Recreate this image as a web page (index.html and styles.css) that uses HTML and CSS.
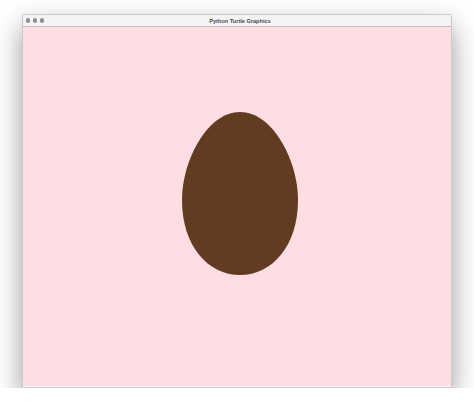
FILE: index.html
```html
<!DOCTYPE html>
<html>
<head>
<meta charset="utf-8">
<link rel="stylesheet" href="styles.css">
</head>
<body>
<div class="window">
  <div class="titlebar">
    <div class="lights"><span class="dot"></span><span class="dot"></span><span class="dot"></span></div>
    <div class="title">Python Turtle Graphics</div>
  </div>
  <div class="canvas">
    <svg class="drawing" width="428" height="360" viewBox="0 0 428 360">
      <path fill="#613c21" d="M217 85 C250 85 275 134 275 173 C275 219 249 248 217 248 C185 248 159 219 159 173 C159 134 184 85 217 85 Z"/>
    </svg>
  </div>
</div>
</body>
</html>
```

FILE: styles.css
```css
html, body {
  margin: 0;
  padding: 0;
  background: #ffffff;
}
body {
  padding: 14px 0 0 22px;
  font-family: "Liberation Sans", Arial, sans-serif;
}
.window {
  width: 428px;
  height: 372px;
  border: 1px solid #c9c9c9;
  border-radius: 2px;
  background: #f4f5f5;
  box-shadow: 0 12px 28px rgba(0, 0, 0, 0.4);
  display: flex;
  flex-direction: column;
  overflow: hidden;
}
.titlebar {
  height: 11px;
  display: grid;
  grid-template-columns: 1fr;
  align-items: center;
  background: #f3f4f4;
  border-bottom: 1px solid #c7b7ba;
}
.lights {
  grid-area: 1 / 1;
  display: flex;
  gap: 2.5px;
  padding-left: 2.5px;
}
.dot {
  width: 4.5px;
  height: 4.5px;
  border-radius: 50%;
  background: #8e8e8e;
}
.title {
  grid-area: 1 / 1;
  text-align: center;
  font-size: 5.6px;
  font-weight: bold;
  color: #4a4a4a;
  padding-left: 6px;
}
.canvas {
  flex: 1;
  background: #ffdde3;
  border-bottom: 1px solid #fff2f4;
  overflow: hidden;
}
.drawing {
  display: block;
}
```
